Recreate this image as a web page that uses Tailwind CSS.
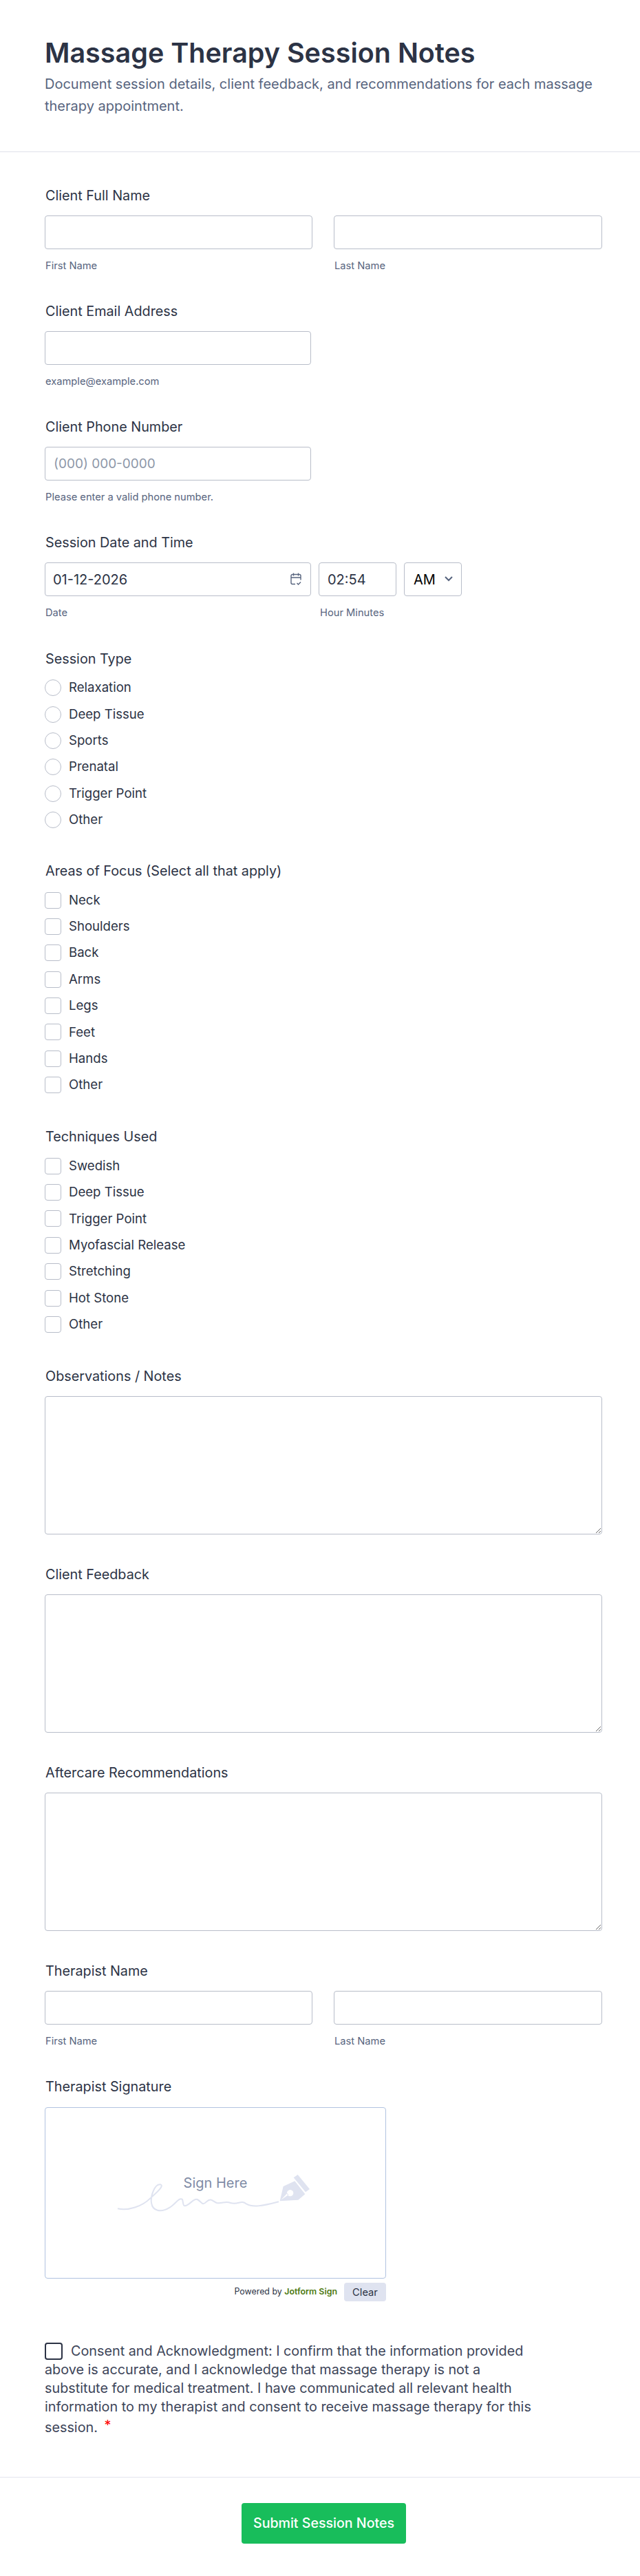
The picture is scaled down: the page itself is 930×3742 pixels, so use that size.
<!DOCTYPE html>
<html lang="en">
<head>
  <meta charset="UTF-8" />
  <title>Massage Therapy Session Notes</title>
  <script src="https://cdn.jsdelivr.net/npm/@tailwindcss/browser@4"></script>
</head>
<body class="bg-white font-[Inter,sans-serif] text-[#2c3345]">

<!-- Header -->
<header class="pt-[53px] pb-[50px] px-[65px] border-b border-[#dfe1ea]">
  <h1 class="text-[39.5px] leading-[48px] font-semibold">Massage Therapy Session Notes</h1>
  <p class="mt-[5px] text-xl leading-8 text-[#57647e]">Document session details, client feedback, and recommendations for each massage therapy appointment.</p>
</header>

<form class="pt-[51px] pl-[65px] pr-[55px]">

  <!-- Client name -->
  <div class="h-[168px]">
    <label class="block pl-px text-[19.8px] leading-6 mb-[17px]">Client Full Name</label>
    <div class="flex gap-[31px]">
      <div class="w-[389px]">
        <input type="text" class="w-full h-[49px] border border-[#b8bdc9] rounded-[4px]" />
        <p class="mt-[15px] pl-px text-[14.7px] leading-[18px] text-[#57647e]">First Name</p>
      </div>
      <div class="flex-1">
        <input type="text" class="w-full h-[49px] border border-[#b8bdc9] rounded-[4px]" />
        <p class="mt-[15px] pl-px text-[14.7px] leading-[18px] text-[#57647e]">Last Name</p>
      </div>
    </div>
  </div>

  <!-- Email -->
  <div class="h-[168px]">
    <label class="block pl-px text-[19.8px] leading-6 mb-[17px]">Client Email Address</label>
    <input type="text" class="block w-[387px] h-[49px] border border-[#b8bdc9] rounded-[4px]" />
    <p class="mt-[15px] pl-px text-[14.7px] leading-[18px] text-[#57647e]">example@example.com</p>
  </div>

  <!-- Phone -->
  <div class="h-[168px]">
    <label class="block pl-px text-[19.8px] leading-6 mb-[17px]">Client Phone Number</label>
    <input type="text" placeholder="(000) 000-0000" class="block w-[387px] h-[49px] px-3 text-[19px] border border-[#b8bdc9] rounded-[4px] placeholder:text-[#8d97a8]" />
    <p class="mt-[15px] pl-px text-[14.7px] leading-[18px] text-[#57647e]">Please enter a valid phone number.</p>
  </div>

  <!-- Date and time -->
  <div class="h-[169px]">
    <label class="block pl-px text-[19.8px] leading-6 mb-[17px]">Session Date and Time</label>
    <div class="flex gap-[11px]">
      <div class="w-[387px]">
        <div class="relative">
          <input type="text" value="01-12-2026" class="block w-full h-[49px] px-[11px] text-xl border border-[#b8bdc9] rounded-[4px]" />
          <svg class="absolute right-[13px] top-[15px] w-[18px] h-[19px]" viewBox="0 0 18 19" fill="none" stroke="#57647e" stroke-width="1.4">
            <path d="M8 16.500H4a2 2 0 0 1-2-2v-10a2 2 0 0 1 2-2h10a2 2 0 0 1 2 2v6M2 7h14M5.500 .5v4M12.500 .5v4M10.500 15l2 2 3.500-3.500" />
          </svg>
        </div>
        <p class="mt-[15px] pl-px text-[14.7px] leading-[18px] text-[#57647e]">Date</p>
      </div>
      <div class="w-[113px]">
        <input type="text" value="02:54" class="block w-full h-[49px] px-3 text-xl border border-[#b8bdc9] rounded-[4px]" />
        <p class="mt-[15px] ml-[2px] text-[14.7px] leading-[18px] whitespace-nowrap text-[#57647e]">Hour Minutes</p>
      </div>
      <div class="relative w-[84px] h-[49px]">
        <select class="appearance-none w-full h-full px-[13px] text-xl text-black border border-[#b8bdc9] rounded-[4px]"><option>AM</option></select>
        <svg class="absolute right-[13px] top-[20px] w-[12px] h-[8px]" viewBox="0 0 12 8" fill="none" stroke="#57647e" stroke-width="2"><path d="M1 1l5 5 5-5" /></svg>
      </div>
    </div>
  </div>

  <!-- Session type -->
  <div class="mb-[43px]">
    <label class="block pl-px text-[19.8px] leading-6 mb-[11px]">Session Type</label>
    <div class="flex flex-col text-[18.6px]">
      <label class="flex items-center gap-[11px] h-[38.4px]"><span class="w-6 h-6 rounded-full border border-[#b8bdc9]"></span>Relaxation</label>
      <label class="flex items-center gap-[11px] h-[38.4px]"><span class="w-6 h-6 rounded-full border border-[#b8bdc9]"></span>Deep Tissue</label>
      <label class="flex items-center gap-[11px] h-[38.4px]"><span class="w-6 h-6 rounded-full border border-[#b8bdc9]"></span>Sports</label>
      <label class="flex items-center gap-[11px] h-[38.4px]"><span class="w-6 h-6 rounded-full border border-[#b8bdc9]"></span>Prenatal</label>
      <label class="flex items-center gap-[11px] h-[38.4px]"><span class="w-6 h-6 rounded-full border border-[#b8bdc9]"></span>Trigger Point</label>
      <label class="flex items-center gap-[11px] h-[38.4px]"><span class="w-6 h-6 rounded-full border border-[#b8bdc9]"></span>Other</label>
    </div>
  </div>

  <!-- Areas of focus -->
  <div class="mb-[44px]">
    <label class="block pl-px text-[19.8px] leading-6 mb-[11px]">Areas of Focus (Select all that apply)</label>
    <div class="flex flex-col text-[18.6px]">
      <label class="flex items-center gap-[11px] h-[38.4px]"><span class="w-6 h-6 rounded-[4px] border border-[#b8bdc9]"></span>Neck</label>
      <label class="flex items-center gap-[11px] h-[38.4px]"><span class="w-6 h-6 rounded-[4px] border border-[#b8bdc9]"></span>Shoulders</label>
      <label class="flex items-center gap-[11px] h-[38.4px]"><span class="w-6 h-6 rounded-[4px] border border-[#b8bdc9]"></span>Back</label>
      <label class="flex items-center gap-[11px] h-[38.4px]"><span class="w-6 h-6 rounded-[4px] border border-[#b8bdc9]"></span>Arms</label>
      <label class="flex items-center gap-[11px] h-[38.4px]"><span class="w-6 h-6 rounded-[4px] border border-[#b8bdc9]"></span>Legs</label>
      <label class="flex items-center gap-[11px] h-[38.4px]"><span class="w-6 h-6 rounded-[4px] border border-[#b8bdc9]"></span>Feet</label>
      <label class="flex items-center gap-[11px] h-[38.4px]"><span class="w-6 h-6 rounded-[4px] border border-[#b8bdc9]"></span>Hands</label>
      <label class="flex items-center gap-[11px] h-[38.4px]"><span class="w-6 h-6 rounded-[4px] border border-[#b8bdc9]"></span>Other</label>
    </div>
  </div>

  <!-- Techniques -->
  <div class="mb-[44px]">
    <label class="block pl-px text-[19.8px] leading-6 mb-[11px]">Techniques Used</label>
    <div class="flex flex-col text-[18.6px]">
      <label class="flex items-center gap-[11px] h-[38.4px]"><span class="w-6 h-6 rounded-[4px] border border-[#b8bdc9]"></span>Swedish</label>
      <label class="flex items-center gap-[11px] h-[38.4px]"><span class="w-6 h-6 rounded-[4px] border border-[#b8bdc9]"></span>Deep Tissue</label>
      <label class="flex items-center gap-[11px] h-[38.4px]"><span class="w-6 h-6 rounded-[4px] border border-[#b8bdc9]"></span>Trigger Point</label>
      <label class="flex items-center gap-[11px] h-[38.4px]"><span class="w-6 h-6 rounded-[4px] border border-[#b8bdc9]"></span>Myofascial Release</label>
      <label class="flex items-center gap-[11px] h-[38.4px]"><span class="w-6 h-6 rounded-[4px] border border-[#b8bdc9]"></span>Stretching</label>
      <label class="flex items-center gap-[11px] h-[38.4px]"><span class="w-6 h-6 rounded-[4px] border border-[#b8bdc9]"></span>Hot Stone</label>
      <label class="flex items-center gap-[11px] h-[38.4px]"><span class="w-6 h-6 rounded-[4px] border border-[#b8bdc9]"></span>Other</label>
    </div>
  </div>

  <!-- Notes -->
  <div class="mb-[46px]">
    <label class="block pl-px text-[19.8px] leading-6 mb-[17px]">Observations / Notes</label>
    <textarea class="block w-full h-[201px] border border-[#b8bdc9] rounded-[4px]"></textarea>
  </div>
  <div class="mb-[46px]">
    <label class="block pl-px text-[19.8px] leading-6 mb-[17px]">Client Feedback</label>
    <textarea class="block w-full h-[201px] border border-[#b8bdc9] rounded-[4px]"></textarea>
  </div>
  <div class="mb-[46px]">
    <label class="block pl-px text-[19.8px] leading-6 mb-[17px]">Aftercare Recommendations</label>
    <textarea class="block w-full h-[201px] border border-[#b8bdc9] rounded-[4px]"></textarea>
  </div>

  <!-- Therapist name -->
  <div class="mb-[45px]">
    <label class="block pl-px text-[19.8px] leading-6 mb-[17px]">Therapist Name</label>
    <div class="flex gap-[31px]">
      <div class="w-[389px]">
        <input type="text" class="w-full h-[49px] border border-[#b8bdc9] rounded-[4px]" />
        <p class="mt-[15px] pl-px text-[14.7px] leading-[18px] text-[#57647e]">First Name</p>
      </div>
      <div class="flex-1">
        <input type="text" class="w-full h-[49px] border border-[#b8bdc9] rounded-[4px]" />
        <p class="mt-[15px] pl-px text-[14.7px] leading-[18px] text-[#57647e]">Last Name</p>
      </div>
    </div>
  </div>

  <!-- Signature -->
  <div>
    <label class="block pl-px text-[19.8px] leading-6 mb-[18px]">Therapist Signature</label>
    <div class="relative w-[496px] h-[249px] border border-[#b1c3e0] rounded-[4px]">
      <span class="absolute left-0 right-0 top-[97px] text-center text-xl leading-6 text-[#7f8ca6]">Sign Here</span>
      <svg class="absolute left-[84px] top-[38px] w-[320px] h-[120px]" viewBox="0 0 960 360" fill="none">
        <path d="M63 325C110 335 170 315 205 280C240 250 265 225 250 220C225 215 205 270 210 300C215 335 250 345 290 320C315 305 330 275 345 285C350 300 345 320 365 310C385 300 395 280 410 285C430 295 430 315 450 295C470 275 480 295 495 300C520 305 530 290 555 300C590 310 600 285 625 305C650 320 690 315 765 295" stroke="#dfe3f0" stroke-width="6" />
        <path fill-rule="evenodd" d="M770 292L785 228L835 205L880 262L850 287ZM815 243a14 14 0 1 0 .1 0ZM775 287L808 264L802 258Z" fill="#dfe3f0" />
        <path d="M830 190L848 177L900 240L882 253Z" fill="#dfe3f0" />
      </svg>
    </div>
    <div class="flex justify-end items-center gap-[10px] w-[496px] mt-[6px]">
      <span class="text-[12.4px] text-[#2c3345]">Powered by <b class="font-semibold text-[#4e7a12]">Jotform Sign</b></span>
      <button type="button" class="w-[61px] h-[27px] rounded-[4px] bg-[#dfe3f0] text-[14.7px] text-[#2c3345]">Clear</button>
    </div>
  </div>

  <!-- Consent -->
  <p class="mt-[59px] w-[720px] text-[19.8px] leading-[27px] text-[#3d4559]">
    <span class="inline-block align-[-6px] w-[26px] h-[25px] mr-[12px] border-2 border-[#2c3345] rounded-[4px]"></span>Consent and Acknowledgment: I confirm that the information provided above is accurate, and I acknowledge that massage therapy is not a substitute for medical treatment. I have communicated all relevant health information to my therapist and consent to receive massage therapy for this session. <span class="ml-1 text-[#f00] align-[3px]">*</span>
  </p>
</form>

<!-- Submit -->
<footer class="mt-[58px] pt-[37px] pl-[11px] border-t border-[#e3e5ee] flex justify-center">
  <button type="button" class="w-[239px] h-[59px] rounded-[4px] bg-[#18bd5b] text-white text-[19.6px] font-medium">Submit Session Notes</button>
</footer>

</body>
</html>
